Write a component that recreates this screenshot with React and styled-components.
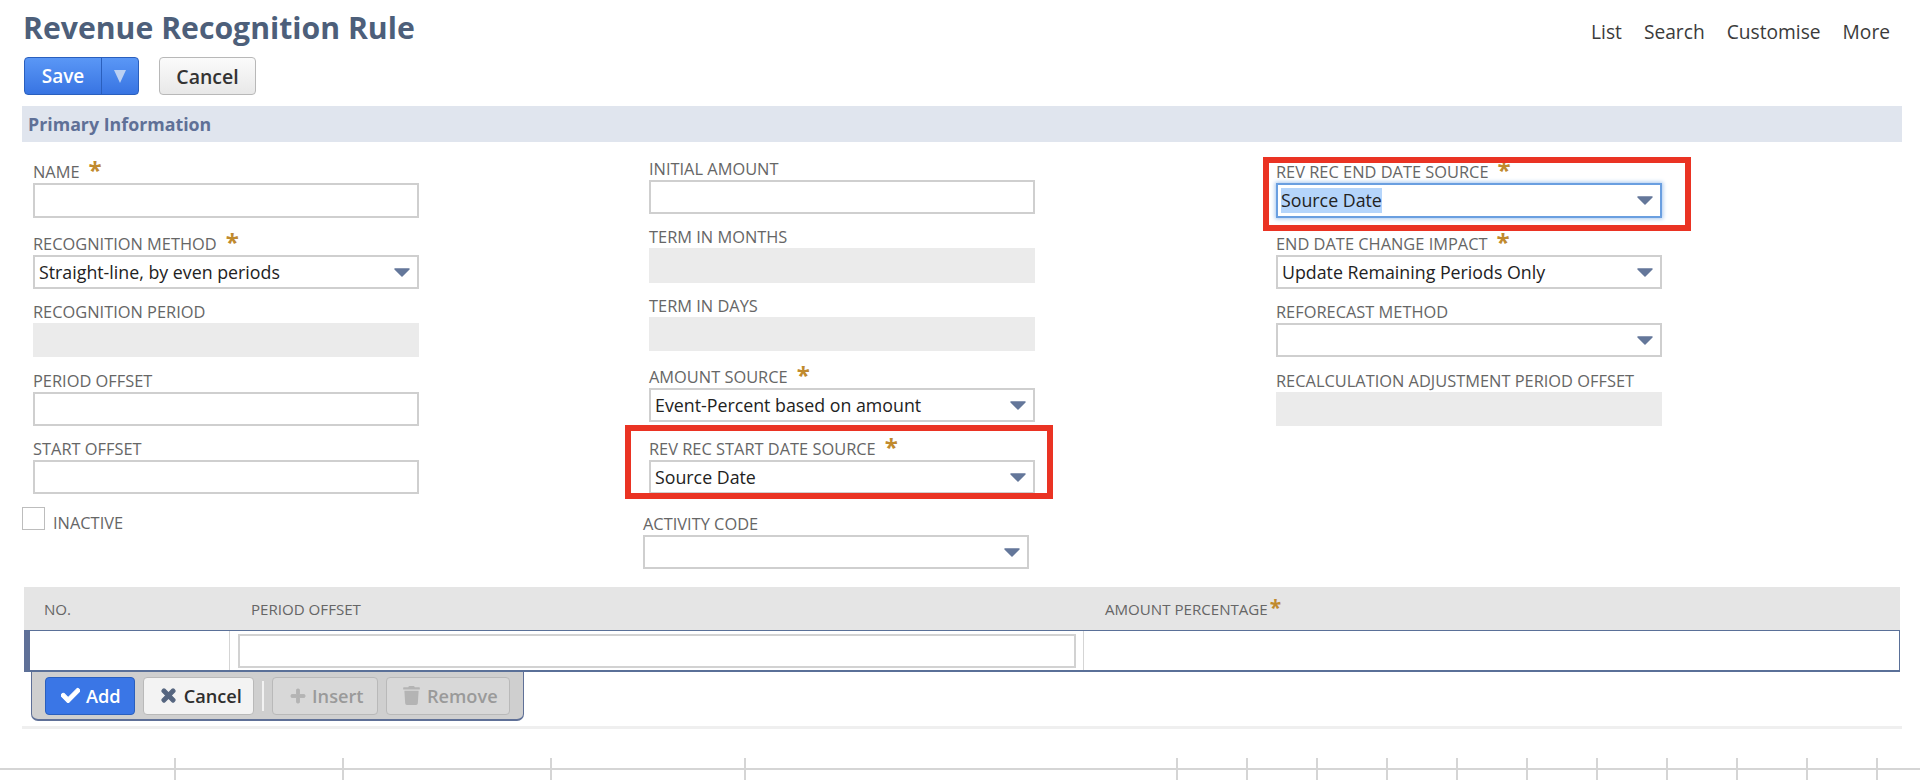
import React from "react";
import styled, { createGlobalStyle } from "styled-components";
import { FaCheck, FaTimes, FaPlus, FaTrash } from "react-icons/fa";

const Global = createGlobalStyle`
  html, body { margin: 0; padding: 0; background: #fff; overflow: hidden; }
  body { font-family: "Open Sans", "Noto Sans", sans-serif; }
`;

const Page = styled.div`
  padding: 0 18px 0 22px;
  width: 1880px;
`;
const Header = styled.header`
  display: flex;
  align-items: center;
  justify-content: space-between;
  height: 57px;
  padding: 0 12px 0 1px;
`;
const Title = styled.h1`
  margin: -1px 0 0;
  font-size: 30.2px;
  font-weight: 700;
  line-height: 40px;
  color: #4d5f7a;
`;
const Links = styled.nav`
  display: flex;
  gap: 22px;
  margin-top: 5px;
`;
const TopLink = styled.span`
  font-size: 19.2px;
  color: #3b3b3b;
`;
const Actions = styled.div`
  display: flex;
  gap: 20px;
  height: 38px;
  margin: 0 0 11px 2px;
`;
const SplitButton = styled.div`
  display: flex;
  width: 115px;
  border: 1px solid #2a5fbd;
  border-radius: 4px;
  overflow: hidden;
  background: linear-gradient(#5a97f6, #3874e2);
  box-sizing: border-box;
`;
const SplitLabel = styled.span`
  flex: 0 0 77px;
  display: flex;
  align-items: center;
  justify-content: center;
  box-sizing: border-box;
  font-size: 19px;
  font-weight: 600;
  color: #fff;
  border-right: 1px solid #2a5fbd;
`;
const SplitCaret = styled.span`
  flex: 1;
  display: flex;
  align-items: center;
  justify-content: center;
`;
const PlainButton = styled.button`
  width: 97px;
  padding: 0;
  border: 1px solid #b8b8b8;
  border-radius: 4px;
  background: linear-gradient(#fbfbfb, #e8e8e8);
  font-family: inherit;
  font-size: 19.5px;
  font-weight: 600;
  color: #333;
`;
const SectionBar = styled.div`
  height: 36px;
  padding-left: 6px;
  background: #e0e5ee;
  font-size: 17.8px;
  font-weight: 700;
  line-height: 37px;
  color: #5f7097;
`;
const FormGrid = styled.div`
  display: grid;
  grid-template-columns: 616px 627px 1fr;
  padding: 0 0 18px 11px;
`;
const Column = styled.div`
  display: flex;
  flex-direction: column;
  align-items: flex-start;
  padding-top: ${(p) => p.$top}px;
`;
const Field = styled.div`
  position: relative;
  width: 386px;
  margin-top: ${(p) => p.$gap || 0}px;
  margin-left: ${(p) => p.$shift || 0}px;
`;
const Label = styled.label`
  display: flex;
  align-items: center;
  box-sizing: border-box;
  height: 22px;
  padding-bottom: 2px;
  font-size: 16.4px;
  color: #666;
  white-space: nowrap;
`;
const Star = styled.span`
  margin-left: 9px;
  font-size: 24px;
  font-weight: 700;
  line-height: 0;
  color: #c08a2e;
  transform: translateY(-1px);
`;
const Control = styled.div`
  display: flex;
  align-items: center;
  justify-content: space-between;
  box-sizing: border-box;
  width: 386px;
  height: ${(p) => p.$h || 34}px;
  padding: 0 7px 0 ${(p) => (p.$focus ? 3 : 4)}px;
  border: 2px solid ${(p) => (p.$focus ? "#6a9fe0" : "#cfcfcf")};
  background: ${(p) => (p.$off ? "#ebebeb" : "#fff")};
  border-color: ${(p) => (p.$off ? "#ebebeb" : p.$focus ? "#6a9fe0" : "#cfcfcf")};
  box-shadow: ${(p) => (p.$focus ? "0 0 4px 1px #a9c8ee" : "none")};
  font-size: 17.8px;
  color: #222;
`;
const Value = styled.span`
  background: ${(p) => (p.$selected ? "#b5d5fb" : "transparent")};
  line-height: 25px;
  white-space: nowrap;
`;
const Highlight = styled.div`
  position: absolute;
  left: ${(p) => p.$x}px;
  top: ${(p) => p.$y}px;
  width: 428px;
  height: 74px;
  box-sizing: border-box;
  border: 6px solid #ea3323;
  pointer-events: none;
`;
const CheckRow = styled.div`
  display: flex;
  align-items: flex-start;
  margin: 13px 0 0 -11px;
`;
const CheckBox = styled.span`
  width: 23px;
  height: 23px;
  box-sizing: border-box;
  border: 1px solid #bdbdbd;
`;
const CheckLabel = styled.span`
  margin: 5px 0 0 8px;
  font-size: 16.4px;
  line-height: 22px;
  color: #666;
`;
const TableWrap = styled.section`
  height: 139px;
  padding: 0 2px;
  border-bottom: 3px solid #efefef;
  box-sizing: content-box;
`;
const TableHead = styled.div`
  display: grid;
  grid-template-columns: 227px 854px 1fr;
  align-items: center;
  height: 43px;
  box-sizing: border-box;
  background: #e5e5e5;
`;
const HeadCell = styled.div`
  padding-left: ${(p) => p.$pad}px;
  font-size: 15.1px;
  color: #666;
  white-space: nowrap;
`;
const TableStar = styled.span`
  margin-left: 2px;
  font-size: 21px;
  font-weight: 700;
  line-height: 0;
  color: #c08a2e;
`;
const EditRow = styled.div`
  display: grid;
  grid-template-columns: 200px 854px 1fr;
  height: 42px;
  box-sizing: border-box;
  border-top: 1px solid #5a7098;
  border-bottom: 2px solid #5a7098;
  border-left: 6px solid #5f7097;
  border-right: 1px solid #5a7098;
`;
const EditCell = styled.div`
  display: flex;
  align-items: center;
  padding: 0 7px 0 8px;
  border-right: ${(p) => (p.$last ? "none" : "1px solid #d5d5d5")};
`;
const EditInput = styled.div`
  flex: 1;
  height: 34px;
  box-sizing: border-box;
  border: 2px solid #d2d2d2;
`;
const RowTools = styled.div`
  display: inline-flex;
  align-items: center;
  height: 49px;
  margin-left: 7px;
  padding: 0 13px;
  box-sizing: border-box;
  width: 493px;
  background: #cfcfcf;
  border: 1px solid #5f7097;
  border-top: none;
  border-bottom-width: 2px;
  border-radius: 0 0 7px 7px;
`;
const ToolButton = styled.span`
  display: flex;
  align-items: center;
  justify-content: center;
  gap: 6px;
  box-sizing: border-box;
  width: ${(p) => p.$w}px;
  height: 38px;
  padding-left: ${(p) => p.$inset || 0}px;
  margin-right: ${(p) => p.$after || 0}px;
  border-radius: 4px;
  border: 1px solid ${(p) => (p.$primary ? "#2a5fbd" : "#b9b9b9")};
  background: ${(p) => (p.$primary ? "#3a76e6" : p.$off ? "#d8d8d8" : "#f3f3f3")};
  color: ${(p) => (p.$primary ? "#fff" : p.$off ? "#9a9a9a" : "#2e2e2e")};
  font-size: 18.2px;
  font-weight: 600;
  svg {
    color: ${(p) => (p.$primary ? "#fff" : p.$off ? "#b4b4b4" : "#55657f")};
    stroke: currentColor;
    stroke-width: ${(p) => p.$heavy || 0}px;
  }
`;
const ToolDivider = styled.span`
  width: 2px;
  height: 30px;
  margin-right: 8px;
  background: #f2f2f2;
`;
const Ruler = styled.div`
  display: flex;
  height: 22px;
  margin-top: 29px;
  width: 1920px;
  background: linear-gradient(#d5d5d5, #d5d5d5) 0 10px / 100% 2px no-repeat;
`;
const Tick = styled.span`
  flex: 0 0 auto;
  box-sizing: border-box;
  border-right: 2px solid #d5d5d5;
`;

const Caret = ({ color = "#64779a" }) => (
  <svg width="16" height="9" viewBox="0 0 16 9">
    <path d="M1 1h14L8 8z" fill={color} stroke={color} strokeWidth="1.5" strokeLinejoin="round" />
  </svg>
);

const FormField = ({ label, required, value, select, off, focus, selected, gap, shift, h, children }) => (
  <Field $gap={gap} $shift={shift}>
    <Label>
      {label}
      {required && <Star>*</Star>}
    </Label>
    <Control $off={off} $focus={focus} $h={h}>
      <Value $selected={selected}>{value}</Value>
      {select && <Caret />}
    </Control>
    {children}
  </Field>
);

const ticks = [175, 343, 551, 745, 1177, 1247, 1317, 1387, 1457, 1527, 1597, 1667, 1737, 1807, 1877];

export default function App() {
  return (
    <>
      <Global />
      <Page>
        <Header>
          <Title>Revenue Recognition Rule</Title>
          <Links>
            <TopLink>List</TopLink>
            <TopLink>Search</TopLink>
            <TopLink>Customise</TopLink>
            <TopLink>More</TopLink>
          </Links>
        </Header>
        <Actions>
          <SplitButton>
            <SplitLabel>Save</SplitLabel>
            <SplitCaret>
              <svg width="12" height="13" viewBox="0 0 12 13">
                <path d="M0 0h12L6 13z" fill="#bcd0f2" />
              </svg>
            </SplitCaret>
          </SplitButton>
          <PlainButton>Cancel</PlainButton>
        </Actions>
        <SectionBar>Primary Information</SectionBar>
        <FormGrid>
          <Column $top={19}>
            <FormField label="NAME" required h={35} />
            <FormField label="RECOGNITION METHOD" required value="Straight-line, by even periods" select gap={15} />
            <FormField label="RECOGNITION PERIOD" off gap={12} />
            <FormField label="PERIOD OFFSET" gap={13} />
            <FormField label="START OFFSET" gap={12} />
            <CheckRow>
              <CheckBox />
              <CheckLabel>INACTIVE</CheckLabel>
            </CheckRow>
          </Column>
          <Column $top={16}>
            <FormField label="INITIAL AMOUNT" />
            <FormField label="TERM IN MONTHS" off gap={12} h={35} />
            <FormField label="TERM IN DAYS" off gap={12} />
            <FormField label="AMOUNT SOURCE" required value="Event-Percent based on amount" select gap={15} />
            <FormField label="REV REC START DATE SOURCE" required value="Source Date" select gap={16}>
              <Highlight $x={-24} $y={-13} />
            </FormField>
            <FormField label="ACTIVITY CODE" select gap={19} shift={-6} />
          </Column>
          <Column $top={19}>
            <FormField label="REV REC END DATE SOURCE" required value="Source Date" select focus selected h={35}>
              <Highlight $x={-13} $y={-4} />
            </FormField>
            <FormField label="END DATE CHANGE IMPACT" required value="Update Remaining Periods Only" select gap={15} />
            <FormField label="REFORECAST METHOD" select gap={12} />
            <FormField label="RECALCULATION ADJUSTMENT PERIOD OFFSET" off gap={13} />
          </Column>
        </FormGrid>
        <TableWrap>
          <TableHead>
            <HeadCell $pad={20}>NO.</HeadCell>
            <HeadCell $pad={0}>PERIOD OFFSET</HeadCell>
            <HeadCell $pad={0}>
              AMOUNT PERCENTAGE<TableStar>*</TableStar>
            </HeadCell>
          </TableHead>
          <EditRow>
            <EditCell />
            <EditCell>
              <EditInput />
            </EditCell>
            <EditCell $last />
          </EditRow>
          <RowTools>
            <ToolButton $primary $w={90} $after={8} $inset={2} $heavy={28}>
              <FaCheck size={19} />
              Add
            </ToolButton>
            <ToolButton $w={112} $after={8} $inset={4} $heavy={36}>
              <FaTimes size={19} />
              Cancel
            </ToolButton>
            <ToolDivider />
            <ToolButton $off $w={106} $after={8} $inset={4} $heavy={30}>
              <FaPlus size={16} />
              Insert
            </ToolButton>
            <ToolButton $off $w={125} $inset={4}>
              <FaTrash size={19} />
              Remove
            </ToolButton>
          </RowTools>
        </TableWrap>
      </Page>
      <Ruler>
        {ticks.map((x, i) => (
          <Tick key={x} style={{ width: x + 1 - (i ? ticks[i - 1] + 1 : 0) }} />
        ))}
      </Ruler>
    </>
  );
}
